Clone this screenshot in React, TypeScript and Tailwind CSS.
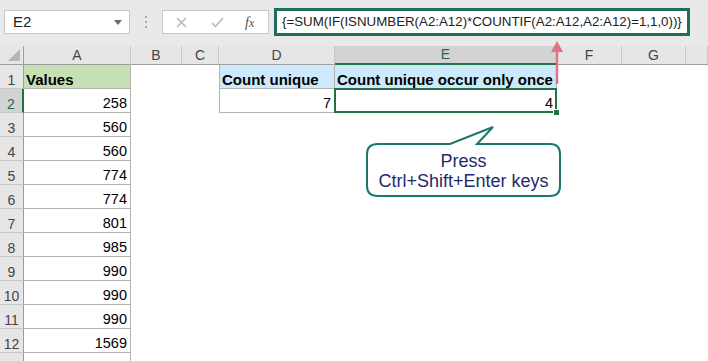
import React from "react";

const cols = ["A", "B", "C", "D", "E", "F", "G", ""];
const values = [258, 560, 560, 774, 774, 801, 985, 990, 990, 990, 1569];

const line = "border-[#b4b4b4]";

function HeaderCell({ label, selected }: { label: string; selected?: boolean }) {
  return (
    <div
      className={
        "flex items-center justify-center border-r border-[#c8c8c8] text-[14px] " +
        (selected
          ? "border-b-2 border-b-[#217346] bg-[#d3d3d3] text-[#1e6b47]"
          : "border-b border-b-[#9e9e9e] bg-[#e6e6e6] text-[#444]")
      }
    >
      {label}
    </div>
  );
}

function RowHead({ n, selected }: { n: number; selected?: boolean }) {
  return (
    <div
      className={
        "flex items-end justify-center border-b border-[#c8c8c8] pb-[1px] text-[14px] leading-[14px] " +
        (selected
          ? "border-r-2 border-r-[#217346] bg-[#d3d3d3] text-[#1e6b47]"
          : "border-r border-r-[#9e9e9e] bg-[#e6e6e6] text-[#444]")
      }
    >
      {n || ""}
    </div>
  );
}

export default function App() {
  const rows: React.ReactNode[] = [];
  for (let r = 1; r <= 13; r++) {
    // row 13 is only a sliver at the bottom, its number is out of view
    rows.push(<RowHead key={`h${r}`} n={r < 13 ? r : 0} selected={r === 2} />);
    // A
    if (r === 1) {
      rows.push(
        <div key={`a${r}`} className={`flex items-end border-r border-b ${line} bg-[#c6e0b4] pb-[1px] pl-[2px] text-[15px] leading-[15px] font-bold text-black`}>
          Values
        </div>
      );
    } else if (r <= 12) {
      rows.push(
        <div key={`a${r}`} className={`flex items-end justify-end border-r border-b ${line} pb-[1px] pr-[3px] text-[14.5px] leading-[15px] text-black`}>
          {values[r - 2]}
        </div>
      );
    } else {
      rows.push(<div key={`a${r}`} className={`border-r ${line}`} />);
    }
    rows.push(<div key={`b${r}`} />);
    rows.push(<div key={`c${r}`} />);
    // D, E
    if (r === 1) {
      rows.push(
        <div key={`d${r}`} className={`flex items-end border-l border-r border-b ${line} bg-[#cdeafc] pb-[1px] pl-[2px] text-[15px] leading-[15px] font-bold text-black`}>
          Count unique
        </div>
      );
      rows.push(
        <div key={`e${r}`} className={`flex items-end border-r border-b ${line} bg-[#cdeafc] pb-[1px] pl-[2px] text-[15px] leading-[15px] font-bold text-black`}>
          Count unique occur only once
        </div>
      );
    } else if (r === 2) {
      rows.push(
        <div key={`d${r}`} className={`flex items-end justify-end border-l border-r border-b ${line} pb-[1px] pr-[3px] text-[14.5px] leading-[15px] text-black`}>
          7
        </div>
      );
      rows.push(
        <div key={`e${r}`} className={`relative flex items-end justify-end border-r border-b ${line} pb-[1px] pr-[3px] text-[14.5px] leading-[15px] text-black`}>
          4
          <div className="absolute -top-px -left-px -right-px -bottom-px border-2 border-[#217346]" />
          <div className="absolute -bottom-[4px] -right-[4px] h-[7px] w-[7px] border border-white bg-[#217346]" />
        </div>
      );
    } else {
      rows.push(<div key={`d${r}`} />);
      rows.push(<div key={`e${r}`} />);
    }
    rows.push(<div key={`f${r}`} />);
    rows.push(<div key={`g${r}`} />);
    rows.push(<div key={`x${r}`} />);
  }

  return (
    <div
      className="relative h-[361px] w-[708px] overflow-hidden bg-white"
      style={{ fontFamily: '"Liberation Sans", Arial, sans-serif' }}
    >
      {/* formula bar */}
      <div className="flex h-[46px] items-start gap-0 bg-[#e9e9e9] pt-[8px]">
        <div className="relative ml-[4px] mt-[2px] flex h-[24px] w-[126px] items-center border border-[#c6c6c6] bg-white pl-[8px] text-[15px] text-[#222]">
          E2
          <svg className="absolute right-[7px] top-[9px]" width="8" height="5" viewBox="0 0 8 5">
            <path d="M0 0 L8 0 L4 5 Z" fill="#6a6a6a" />
          </svg>
        </div>
        <div className="ml-[14px] mt-[8px] flex w-[4px] flex-col items-center gap-[3px]">
          <span className="h-[2px] w-[2px] bg-[#a8a8a8]" />
          <span className="h-[2px] w-[2px] bg-[#a8a8a8]" />
          <span className="h-[2px] w-[2px] bg-[#a8a8a8]" />
        </div>
        <div className="ml-[14px] mt-[2px] flex h-[24px] w-[107px] items-center border border-[#c6c6c6] bg-white">
          <svg className="ml-[13px]" width="11" height="11" viewBox="0 0 11 11">
            <path d="M1 1 L10 10 M10 1 L1 10" stroke="#b9b9b9" strokeWidth="1.5" />
          </svg>
          <svg className="ml-[24px]" width="13" height="11" viewBox="0 0 13 11">
            <path d="M1 6 L4.5 9.5 L12 1" stroke="#b9b9b9" strokeWidth="1.6" fill="none" />
          </svg>
          <span
            className="ml-[21px] text-[14px] italic text-[#505050]"
            style={{ fontFamily: '"Liberation Serif", "Times New Roman", serif' }}
          >
            f<span className="text-[12px]">x</span>
          </span>
        </div>
        <div className="ml-[5px] flex h-[28px] w-[416px] items-center border-[3px] border-[#1e6e5e] bg-white pl-[5px] text-[13.3px] text-[#222]">
          {"{=SUM(IF(ISNUMBER(A2:A12)*COUNTIF(A2:A12,A2:A12)=1,1,0))}"}
        </div>
      </div>

      {/* sheet */}
      <div className="grid grid-cols-[24px_107px_51px_37px_116px_222px_65px_64px_1fr] grid-rows-[19px_repeat(13,24px)]">
        <div className="relative border-r border-b border-r-[#9e9e9e] border-b-[#9e9e9e] bg-[#e6e6e6]">
          <svg className="absolute bottom-[3px] right-[3px]" width="12" height="12" viewBox="0 0 12 12">
            <path d="M12 0 L12 12 L0 12 Z" fill="#b5b5b5" />
          </svg>
        </div>
        {cols.map((c) => (
          <HeaderCell key={c || "h"} label={c} selected={c === "E"} />
        ))}
        {rows}
      </div>

      {/* annotations */}
      <svg className="pointer-events-none absolute left-0 top-0" width="708" height="361" viewBox="0 0 708 361">
        <line x1="557" y1="50" x2="557" y2="84" stroke="#e07480" strokeWidth="2.5" />
        <path d="M557 41 L551 52 L563 52 Z" fill="#e07480" />
        <path
          d="M378 144 L450 144 L493 127 L477 144 L550 144 Q560 144 560 154 L560 186 Q560 196 550 196 L378 196 Q367 196 367 186 L367 154 Q367 144 378 144 Z"
          fill="white"
          stroke="#1b786a"
          strokeWidth="2"
        />
      </svg>
      <div className="absolute left-[367px] top-[145px] flex h-[51px] w-[193px] flex-col items-center justify-center text-[18px] leading-[20px] text-[#1f2a6a]">
        <span>Press</span>
        <span>Ctrl+Shift+Enter keys</span>
      </div>
    </div>
  );
}
